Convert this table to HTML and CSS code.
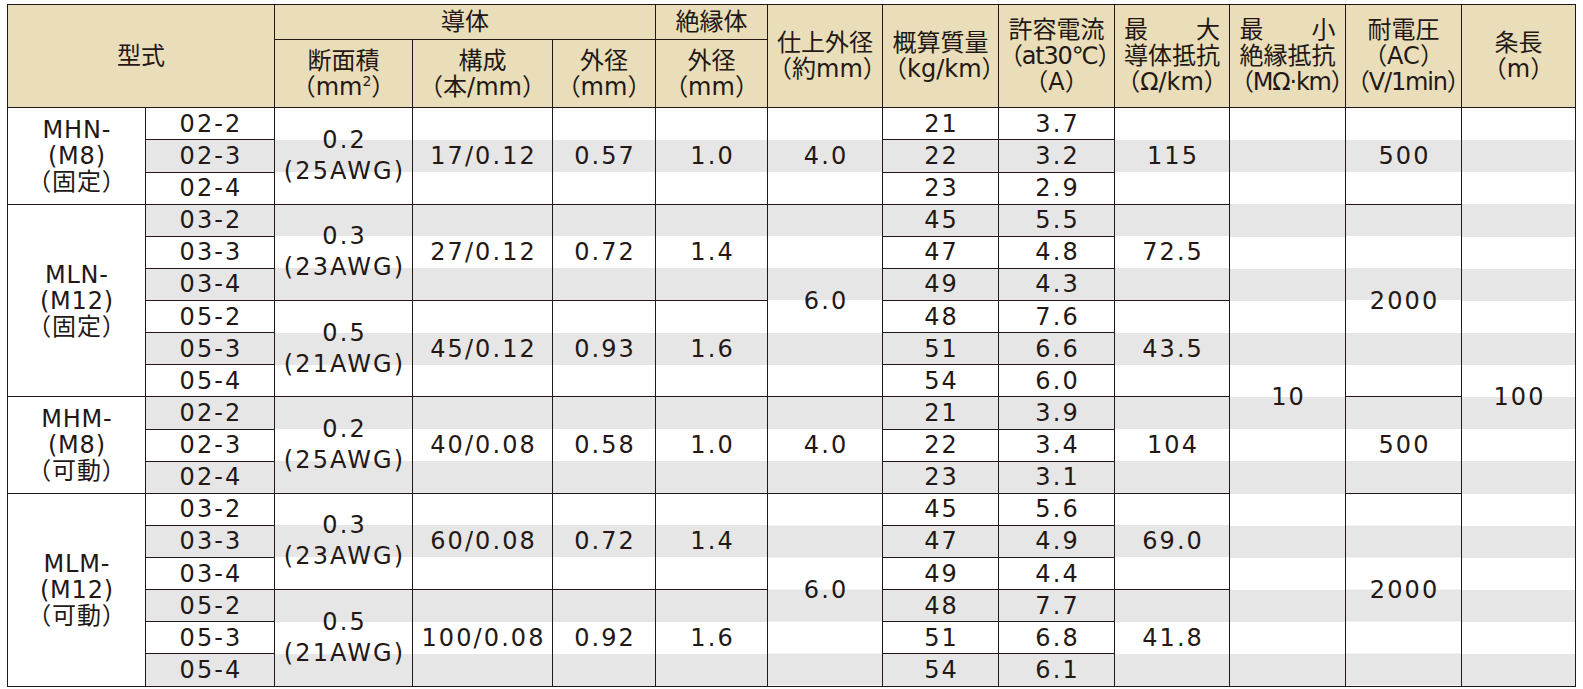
FILE: index.html
```html
<!DOCTYPE html>
<html lang="ja">
<head>
<meta charset="utf-8">
<title>ケーブル仕様</title>
<link rel="stylesheet" href="styles.css">
</head>
<body>
<table class="spec">
  <colgroup>
    <col class="c-model"><col class="c-var"><col class="c-area"><col class="c-comp"><col class="c-od">
    <col class="c-ins"><col class="c-fin"><col class="c-mass"><col class="c-cur"><col class="c-res">
    <col class="c-insr"><col class="c-volt"><col class="c-len">
  </colgroup>
  <thead>
    <tr class="r1">
      <th colspan="2" rowspan="2">型式</th>
      <th colspan="3">導体</th>
      <th>絶縁体</th>
      <th rowspan="2">仕上外径<br>（約mm）</th>
      <th rowspan="2">概算質量<br>（kg/km）</th>
      <th rowspan="2">許容電流<br><span class="tight">（at30℃）</span><br>（A）</th>
      <th rowspan="2"><span class="jl"><span class="spread"><span>最</span><span>大</span></span>導体抵抗</span><br>（Ω/km）</th>
      <th rowspan="2"><span class="jl"><span class="spread"><span>最</span><span>小</span></span>絶縁抵抗</span><br><span class="tight">（MΩ·km）</span></th>
      <th rowspan="2">耐電圧<br>（AC）<br><span class="tight">（V/1min）</span></th>
      <th rowspan="2">条長<br>（m）</th>
    </tr>
    <tr class="r2">
      <th>断面積<br>（mm<sup>2</sup>）</th>
      <th>構成<br>（本/mm）</th>
      <th>外径<br>（mm）</th>
      <th>外径<br>（mm）</th>
    </tr>
  </thead>
  <tbody>
    <tr>
      <td class="model" rowspan="3">MHN-<br>(M8)<br>（固定）</td>
      <td>02-2</td>
      <td class="area" rowspan="3">0.2<br>(25AWG)</td>
      <td rowspan="3">17/0.12</td>
      <td rowspan="3">0.57</td>
      <td rowspan="3">1.0</td>
      <td rowspan="3">4.0</td>
      <td>21</td>
      <td>3.7</td>
      <td rowspan="3">115</td>
      <td class="whole" rowspan="18">10</td>
      <td rowspan="3">500</td>
      <td class="whole" rowspan="18">100</td>
    </tr>
    <tr><td>02-3</td><td>22</td><td>3.2</td></tr>
    <tr><td>02-4</td><td>23</td><td>2.9</td></tr>

    <tr>
      <td class="model" rowspan="6">MLN-<br>(M12)<br>（固定）</td>
      <td>03-2</td>
      <td class="area" rowspan="3">0.3<br>(23AWG)</td>
      <td rowspan="3">27/0.12</td>
      <td rowspan="3">0.72</td>
      <td rowspan="3">1.4</td>
      <td rowspan="6">6.0</td>
      <td>45</td>
      <td>5.5</td>
      <td rowspan="3">72.5</td>
      <td rowspan="6">2000</td>
    </tr>
    <tr><td>03-3</td><td>47</td><td>4.8</td></tr>
    <tr><td>03-4</td><td>49</td><td>4.3</td></tr>
    <tr>
      <td>05-2</td>
      <td class="area" rowspan="3">0.5<br>(21AWG)</td>
      <td rowspan="3">45/0.12</td>
      <td rowspan="3">0.93</td>
      <td rowspan="3">1.6</td>
      <td>48</td>
      <td>7.6</td>
      <td rowspan="3">43.5</td>
    </tr>
    <tr><td>05-3</td><td>51</td><td>6.6</td></tr>
    <tr><td>05-4</td><td>54</td><td>6.0</td></tr>

    <tr>
      <td class="model" rowspan="3">MHM-<br>(M8)<br>（可動）</td>
      <td>02-2</td>
      <td class="area" rowspan="3">0.2<br>(25AWG)</td>
      <td rowspan="3">40/0.08</td>
      <td rowspan="3">0.58</td>
      <td rowspan="3">1.0</td>
      <td rowspan="3">4.0</td>
      <td>21</td>
      <td>3.9</td>
      <td rowspan="3">104</td>
      <td rowspan="3">500</td>
    </tr>
    <tr><td>02-3</td><td>22</td><td>3.4</td></tr>
    <tr><td>02-4</td><td>23</td><td>3.1</td></tr>

    <tr>
      <td class="model" rowspan="6">MLM-<br>(M12)<br>（可動）</td>
      <td>03-2</td>
      <td class="area" rowspan="3">0.3<br>(23AWG)</td>
      <td rowspan="3">60/0.08</td>
      <td rowspan="3">0.72</td>
      <td rowspan="3">1.4</td>
      <td rowspan="6">6.0</td>
      <td>45</td>
      <td>5.6</td>
      <td rowspan="3">69.0</td>
      <td rowspan="6">2000</td>
    </tr>
    <tr><td>03-3</td><td>47</td><td>4.9</td></tr>
    <tr><td>03-4</td><td>49</td><td>4.4</td></tr>
    <tr>
      <td>05-2</td>
      <td class="area" rowspan="3">0.5<br>(21AWG)</td>
      <td rowspan="3">100/0.08</td>
      <td rowspan="3">0.92</td>
      <td rowspan="3">1.6</td>
      <td>48</td>
      <td>7.7</td>
      <td rowspan="3">41.8</td>
    </tr>
    <tr><td>05-3</td><td>51</td><td>6.8</td></tr>
    <tr><td>05-4</td><td>54</td><td>6.1</td></tr>
  </tbody>
</table>
</body>
</html>
```

FILE: styles.css
```css
* {
  box-sizing: border-box;
}

body {
  margin: 4px 0 0 7px;
  background: #ffffff;
  color: #231815;
  font-family: "DejaVu Sans", "Noto Sans CJK JP", sans-serif;
}

.spec {
  border-collapse: collapse;
  table-layout: fixed;
  width: 1569px;
}

.c-model { width: 138px; }
.c-var { width: 129px; }
.c-area { width: 138px; }
.c-comp { width: 140px; }
.c-od { width: 103px; }
.c-ins { width: 112px; }
.c-fin { width: 115px; }
.c-mass { width: 116px; }
.c-cur { width: 116px; }
.c-res { width: 115px; }
.c-insr { width: 116px; }
.c-volt { width: 116px; }
.c-len { width: 114px; }

.spec th,
.spec td {
  border: 1px solid #231815;
  padding: 0;
  text-align: center;
  vertical-align: middle;
  font-weight: 400;
}

.spec thead th {
  background: #e9deb9;
  font-size: 24px;
  line-height: 26px;
  white-space: nowrap;
}

.spec thead .r1 {
  height: 35.3px;
}

.spec thead .r2 {
  height: 68px;
}

.spec sup {
  font-size: 14px;
  line-height: 0;
  vertical-align: 9px;
}

.tight {
  letter-spacing: -1.2px;
}

.jl {
  display: inline-block;
  vertical-align: top;
}

.spread {
  display: flex;
  justify-content: space-between;
}

.spec tbody {
  background: repeating-linear-gradient(to bottom, #ffffff 0, #ffffff 32.13px, #e6e6e6 32.13px, #e6e6e6 64.26px);
}

.spec tbody tr {
  height: 32.13px;
}

.spec td {
  font-size: 24px;
  line-height: 28px;
  letter-spacing: 2.1px;
  padding-left: 2.1px;
  white-space: nowrap;
}

.spec td.model {
  background: #ffffff;
  line-height: 26px;
  letter-spacing: 0.8px;
  padding-left: 0.8px;
}

.spec td.area {
  line-height: 31px;
}
```
